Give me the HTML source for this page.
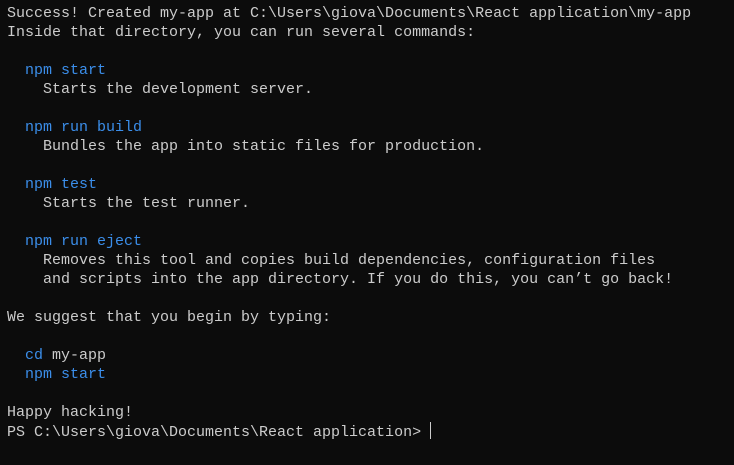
<!DOCTYPE html>
<html><head><meta charset="utf-8"><style>
html,body{margin:0;padding:0;background:#0c0c0c;width:734px;height:465px;overflow:hidden}
pre{margin:0;padding:4px 0 0 7px;font-family:"Liberation Mono",monospace;font-size:15px;line-height:19px;color:#cccccc;letter-spacing:0}
.b{color:#3b8eea}
.cur{display:inline-block;width:1px;height:17px;background:#cccccc;vertical-align:-3px}
</style></head><body><pre>Success! Created my-app at C:\Users\giova\Documents\React application\my-app
Inside that directory, you can run several commands:

  <span class="b">npm start</span>
    Starts the development server.

  <span class="b">npm run build</span>
    Bundles the app into static files for production.

  <span class="b">npm test</span>
    Starts the test runner.

  <span class="b">npm run eject</span>
    Removes this tool and copies build dependencies, configuration files
    and scripts into the app directory. If you do this, you can’t go back!

We suggest that you begin by typing:

  <span class="b">cd</span> my-app
  <span class="b">npm start</span>

Happy hacking!
PS C:\Users\giova\Documents\React application&gt; <span class="cur"></span></pre></body></html>
